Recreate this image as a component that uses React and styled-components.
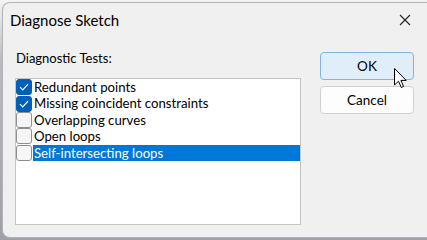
import React from "react";
import styled, { createGlobalStyle } from "styled-components";

const Global = createGlobalStyle`
  html, body { margin: 0; padding: 0; }
  body {
    width: 427px;
    height: 240px;
    overflow: hidden;
    background: linear-gradient(to bottom, #f4f4f4 0px, #b8bcc2 60px, #9da1a7 240px);
    font-family: Lato, "Noto Sans", "Liberation Sans", sans-serif;
  }
`;

const Window = styled.div`
  position: relative;
  box-sizing: border-box;
  margin: 2px 0 0 2px;
  width: 426px;
  height: 236px;
  background: #f0f0f0;
  border: 1px solid #b4b4b4;
  border-right: none;
  border-radius: 8px 0 0 8px;
  display: flex;
  flex-direction: column;
  color: #000;
`;

const TitleBar = styled.div`
  height: 34px;
  display: flex;
  align-items: center;
  justify-content: space-between;
  padding: 0 0 0 7px;
`;

const Title = styled.div`
  font-size: 15px;
  line-height: 20px;
`;

const CloseButton = styled.div`
  width: 46px;
  height: 32px;
  display: flex;
  align-items: center;
  justify-content: center;
`;

const Body = styled.div`
  display: flex;
  padding: 0 14px 0 12px;
  gap: 19px;
`;

const LeftCol = styled.div`
  display: flex;
  flex-direction: column;
`;

const Label = styled.div`
  font-size: 13px;
  line-height: 18px;
  padding: 12px 0 0 1px;
  height: 41px;
  box-sizing: border-box;
`;

const ListBox = styled.div`
  box-sizing: border-box;
  width: 286px;
  height: 147px;
  background: #fff;
  border: 1px solid #c4c4c4;
`;

const Row = styled.div`
  display: flex;
  align-items: center;
  height: 16.4px;
`;

const Box = styled.div`
  box-sizing: border-box;
  width: 16px;
  height: 16px;
  border-radius: 3px;
  display: flex;
  align-items: center;
  justify-content: center;
  background: ${(p) => (p.$checked ? "#005fb8" : "#f6f6f6")};
  border: 1px solid ${(p) => (p.$checked ? "#005fb8" : "#8e8e8e")};
  flex: none;
`;

const ItemText = styled.div`
  flex: 1;
  height: 16.4px;
  margin-left: 1px;
  padding-left: 1px;
  font-size: 13.2px;
  line-height: 16.4px;
  white-space: nowrap;
  background: ${(p) => (p.$selected ? "#0078d7" : "transparent")};
  color: ${(p) => (p.$selected ? "#fff" : "#000")};
`;

const RightCol = styled.div`
  display: flex;
  flex-direction: column;
  gap: 6px;
  padding-top: 15px;
`;

const Button = styled.div`
  box-sizing: border-box;
  width: 94px;
  height: 28px;
  border-radius: 4px;
  display: flex;
  align-items: center;
  justify-content: center;
  font-size: 13.5px;
  background: ${(p) => (p.$primary ? "#e0eef9" : "#fdfdfd")};
  border: 1px solid ${(p) => (p.$primary ? "#7fb4e4" : "#d0d0d0")};
`;

const Cursor = styled.svg`
  position: absolute;
  left: 390px;
  top: 64px;
`;

const Check = () => (
  <svg width="10" height="8" viewBox="0 0 10 8">
    <path d="M1 4.2 L3.8 7 L9 1.2" fill="none" stroke="#fff" strokeWidth="1.2" />
  </svg>
);

const items = [
  { label: "Redundant points", checked: true },
  { label: "Missing coincident constraints", checked: true },
  { label: "Overlapping curves", checked: false },
  { label: "Open loops", checked: false },
  { label: "Self-intersecting loops", checked: false, selected: true },
];

export default function App() {
  return (
    <>
      <Global />
      <Window>
        <TitleBar>
          <Title>Diagnose Sketch</Title>
          <CloseButton>
            <svg width="12" height="12" viewBox="0 0 12 12">
              <path d="M1 1 L11 11 M11 1 L1 11" stroke="#222" strokeWidth="1.1" />
            </svg>
          </CloseButton>
        </TitleBar>
        <Body>
          <LeftCol>
            <Label>Diagnostic Tests:</Label>
            <ListBox>
              {items.map((it) => (
                <Row key={it.label}>
                  <Box $checked={it.checked}>{it.checked && <Check />}</Box>
                  <ItemText $selected={it.selected}>{it.label}</ItemText>
                </Row>
              ))}
            </ListBox>
          </LeftCol>
          <RightCol>
            <Button $primary>OK</Button>
            <Button>Cancel</Button>
          </RightCol>
        </Body>
        <Cursor width="16" height="24" viewBox="0 0 16 24">
          <path
            d="M1.5 1.5 L1.5 18 L5.5 14.2 L8.3 20.5 L10.6 19.5 L7.9 13.4 L13.2 13.4 Z"
            fill="#fff"
            stroke="#000"
            strokeWidth="1"
            strokeLinejoin="round"
          />
        </Cursor>
      </Window>
    </>
  );
}
